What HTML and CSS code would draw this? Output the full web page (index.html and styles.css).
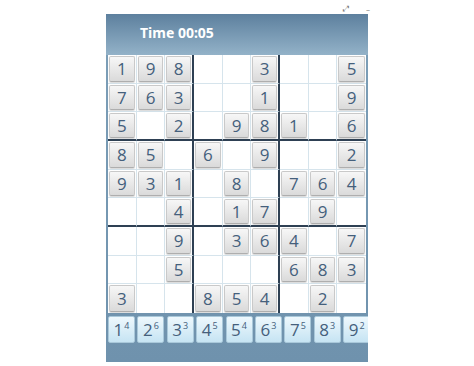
FILE: index.html
```html
<!DOCTYPE html>
<html lang="en">
<head>
  <meta charset="UTF-8" />
  <title>Sudoku</title>
  <link rel="stylesheet" href="styles.css">
</head>
<body>
  <div class="window-controls">
    <span class="ctrl-resize">⤢</span>
    <span class="ctrl-min">–</span>
  </div>

  <div class="panel">
    <div class="header">
      <span id="timer">Time 00:05</span>
    </div>
    <div class="board" id="board"></div>
    <div class="numbar" id="numbar"></div>
  </div>

<script>
const puzzle = [
  "198..3..5",
  "763..1..9",
  "5.2.981.6",
  "85.6.9..2",
  "931.8.764",
  "..4.17.9.",
  "..9.364.7",
  "..5...683",
  "3..854.2."
];
const counts = [4, 6, 3, 5, 4, 3, 5, 3, 2];

const board = document.getElementById("board");
for (let r = 0; r < 9; r++) {
  for (let c = 0; c < 9; c++) {
    const cell = document.createElement("div");
    cell.className = "cell";
    if (c === 2 || c === 5) cell.classList.add("box-right");
    if (r === 2 || r === 5) cell.classList.add("box-bottom");
    if (c === 8) cell.classList.add("last-col");
    if (r === 8) cell.classList.add("last-row");
    const ch = puzzle[r][c];
    if (ch !== ".") {
      const tile = document.createElement("div");
      tile.className = "tile";
      tile.textContent = ch;
      cell.appendChild(tile);
    }
    board.appendChild(cell);
  }
}

const numbar = document.getElementById("numbar");
counts.forEach((n, i) => {
  const btn = document.createElement("div");
  btn.className = "num-btn";
  btn.innerHTML = (i + 1) + "<sup>" + n + "</sup>";
  numbar.appendChild(btn);
});
</script>
</body>
</html>
```

FILE: styles.css
```css
body {
  margin: 0;
  background: #fff;
  font-family: "Open Sans", "Noto Sans", sans-serif;
}
.window-controls {
  position: absolute;
  top: 1px;
  left: 343px;
  width: 27px;
  height: 14px;
  display: flex;
  justify-content: space-between;
  align-items: center;
  font-size: 8px;
  color: #777;
}
.panel {
  margin: 14px 0 0 106px;
  width: 262px;
  height: 348px;
  overflow: hidden;
  background: linear-gradient(#7d9fb8, #6f92ad);
}
.header {
  height: 41px;
  display: flex;
  align-items: center;
  padding-left: 34px;
  background: linear-gradient(#5d809e, #93b2c8);
}
#timer {
  color: #fff;
  font-weight: bold;
  font-size: 14px;
  font-family: "Noto Sans", sans-serif;
  margin-top: -4px;
}
.board {
  margin-left: 2px;
  width: 258px;
  height: 258px;
  display: grid;
  grid-template-columns: repeat(9, 1fr);
  grid-template-rows: repeat(9, 1fr);
  background: #fff;
}
.cell {
  border-right: 1px solid #d6e4ec;
  border-bottom: 1px solid #d6e4ec;
  display: flex;
  min-width: 0;
  min-height: 0;
}
.cell.box-right { border-right: 2px solid #2e4053; }
.cell.box-bottom { border-bottom: 2px solid #2e4053; }
.cell.last-col { border-right: none; }
.cell.last-row { border-bottom: none; }
.tile {
  flex: 1;
  margin: 1px;
  border-radius: 2px;
  background: linear-gradient(#f7f7f7, #dadada);
  border: 1px solid #c9c9c9;
  border-bottom-color: #aeaeae;
  box-shadow: 0 1px 1px rgba(0,0,0,0.15);
  display: flex;
  align-items: center;
  justify-content: center;
  color: #45607c;
  font-size: 17px;
}
.numbar {
  display: flex;
  gap: 2.4px;
  padding: 3px 0 0 2px;
}
.num-btn {
  flex: 0 0 27px;
  height: 27px;
  box-sizing: border-box;
  border: 1px solid #a9c8da;
  border-radius: 2px;
  background: linear-gradient(#eef8fd, #c6e4f3);
  color: #45607c;
  font-size: 17px;
  display: flex;
  align-items: center;
  justify-content: center;
}
.num-btn sup {
  font-size: 9px;
  align-self: flex-start;
  margin-top: 2px;
  margin-left: 1px;
}
```
